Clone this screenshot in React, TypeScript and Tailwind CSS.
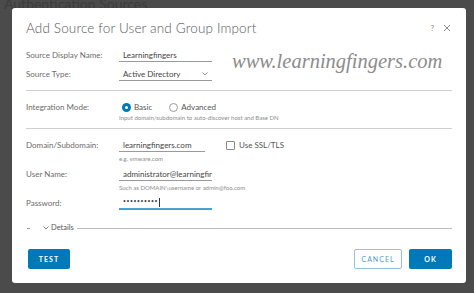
const font = "font-['Lato','Liberation_Sans',sans-serif]";

const Field = ({ label, value, width = "w-[93px]", active = false }: { label: string; value: string; width?: string; active?: boolean }) => (
  <div className="flex h-[14px] items-center">
    <div className="w-[93px] text-[8px] text-[#6b6b6b]">{label}</div>
    <div
      className={`flex h-[14px] items-center px-[4px] text-[8px] text-[#444] ${width} ${
        active ? "border-b-2 border-[#4a9fd3]" : "border-b border-[#9a9a9a]"
      }`}
    >
      {active ? <span className="text-[5px] tracking-[0.6px]">{value}</span> : value}
      {active && <span className="ml-[1px] h-[9px] w-px bg-[#333]" />}
    </div>
  </div>
);

const Hint = ({ text }: { text: string }) => (
  <div className="flex h-[8px] items-center pl-[93px] text-[6px] text-[#8c8c8c]">{text}</div>
);

export default function App() {
  return (
    <div className={`relative h-[293px] w-[474px] overflow-hidden bg-[#4b4b4b] pl-[12px] pt-[8px] ${font}`}>
      <div className="absolute left-[4px] top-[-7px] text-[14px] text-[#3c3c3c]">Authentication Sources</div>
      <div className="relative h-[275px] w-[454px] rounded-[3px] bg-white px-[14px]">
        <div className="flex h-[40px] items-center justify-between">
          <div className="text-[13.5px] font-light tracking-[0.15px] text-[#575757]">Add Source for User and Group Import</div>
          <div className="flex items-center gap-[9px] pr-[1px] text-[#8a8a8a]">
            <span className="text-[8px]">?</span>
            <svg width="8" height="8" viewBox="0 0 8 8" className="stroke-[#8a8a8a]">
              <path d="M1 1L7 7M7 1L1 7" strokeWidth="1" />
            </svg>
          </div>
        </div>

        <div className="absolute left-[220px] top-[38px] font-['Liberation_Serif',serif] text-[20.5px] italic text-[#8c8c8c]">
          www.learningfingers.com
        </div>

        <div className="flex flex-col gap-[5px]">
          <Field label="Source Display Name:" value="Learningfingers" />
          <div className="flex h-[14px] items-center">
            <div className="w-[93px] text-[8px] text-[#6b6b6b]">Source Type:</div>
            <div className="flex h-[14px] w-[93px] items-center justify-between border-b border-[#9a9a9a] px-[4px] text-[8px] text-[#444]">
              Active Directory
              <svg width="6" height="4" viewBox="0 0 6 4">
                <path d="M0.5 0.5L3 3L5.5 0.5" fill="none" stroke="#777" strokeWidth="0.8" />
              </svg>
            </div>
          </div>
        </div>

        <div className="mt-[9px] h-px bg-[#cfcfcf]" />

        <div className="pt-[10px]">
          <div className="flex h-[12px] items-center">
            <div className="w-[96px] text-[8px] text-[#6b6b6b]">Integration Mode:</div>
            <div className="flex items-center gap-[3px] text-[8px] text-[#555]">
              <span className="flex h-[9px] w-[9px] items-center justify-center rounded-full bg-[#0079b8]">
                <span className="h-[3px] w-[3px] rounded-full bg-white" />
              </span>
              Basic
            </div>
            <div className="ml-[17px] flex items-center gap-[3px] text-[8px] text-[#555]">
              <span className="h-[9px] w-[9px] rounded-full border border-[#9a9a9a]" />
              Advanced
            </div>
          </div>
          <Hint text="Input domain/subdomain to auto-discover host and Base DN" />
        </div>

        <div className="mt-[7px] h-px bg-[#cfcfcf]" />

        <div className="pt-[9px]">
          <div className="flex h-[14px] items-center">
            <Field label="Domain/Subdomain:" value="learningfingers.com" width="w-[86px]" />
            <div className="ml-[21px] flex items-center gap-[4px] text-[8px] text-[#555]">
              <span className="h-[9px] w-[9px] rounded-[1px] border border-[#8a8a8a]" />
              Use SSL/TLS
            </div>
          </div>
          <div className="mt-[2px]">
            <Hint text="e.g. vmware.com" />
          </div>
          <div className="mt-[5px]">
            <Field label="User Name:" value="administrator@learningfir" />
          </div>
          <div className="mt-[2px]">
            <Hint text="Such as DOMAIN\username or admin@foo.com" />
          </div>
          <div className="mt-[5px]">
            <Field label="Password:" value="••••••••••" active />
          </div>
        </div>

        <div className="mt-[13px] flex h-[10px] items-center text-[7.5px] text-[#555]">
          <span className="ml-[1px] h-px w-[3px] bg-[#999]" />
          <svg width="6" height="4" viewBox="0 0 6 4" className="ml-[13px]">
            <path d="M0.5 0.5L3 3L5.5 0.5" fill="none" stroke="#666" strokeWidth="0.8" />
          </svg>
          <span className="ml-[2px]">Details</span>
          <span className="ml-[3px] h-px flex-1 bg-[#bdbdbd]" />
        </div>

        <div className="mt-[16px] flex items-center justify-between">
          <button className="ml-[2px] h-[20px] w-[42px] rounded-[2px] bg-[#0079b8] text-[7px] font-bold tracking-[1px] text-white">
            TEST
          </button>
          <div className="flex gap-[7px]">
            <button className="h-[20px] w-[48px] rounded-[2px] border border-[#8fc3e0] bg-white text-[7px] tracking-[1px] text-[#4f9dcc]">
              CANCEL
            </button>
            <button className="h-[20px] w-[43px] rounded-[2px] bg-[#0079b8] text-[7px] font-bold tracking-[1px] text-white">
              OK
            </button>
          </div>
        </div>
      </div>
    </div>
  );
}
